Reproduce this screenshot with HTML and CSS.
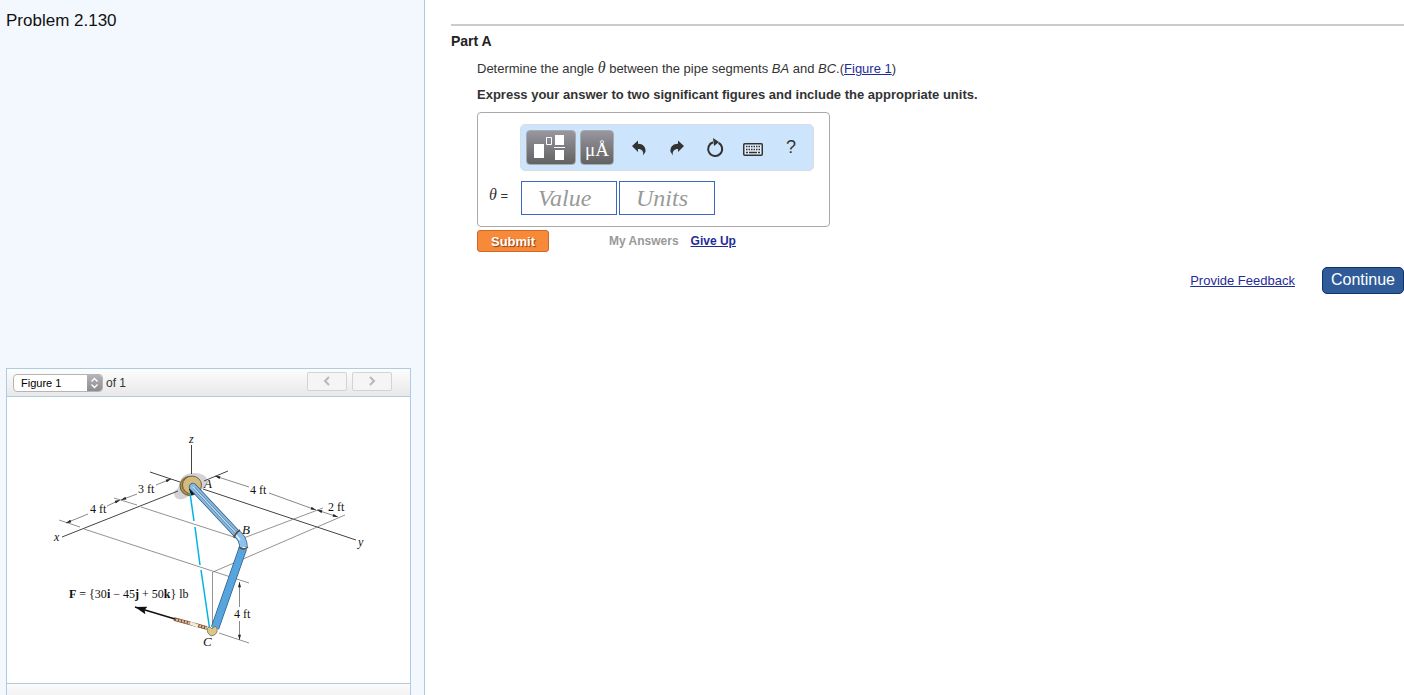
FILE: index.html
```html
<!DOCTYPE html>
<html lang="en">

<head>
    <meta charset="UTF-8">
    <meta name="viewport" content="width=device-width, initial-scale=1.0">
    <title>Problem 2.130</title>
    <link rel="stylesheet" href="styles.css">
</head>

<body>
    <aside class="sidebar">
        <h1>Problem 2.130</h1>

        <section class="figure-panel">
            <div class="figure-bar">
                <div class="figure-select">
                    <select id="figure" aria-label="Figure">
                        <option>Figure 1</option>
                    </select>
                    <span class="arrows">
                        <svg width="9" height="12" viewBox="0 0 9 12"><path d="M1.5 4.5l3-3 3 3M1.5 7.5l3 3 3-3" fill="none" stroke="#fff" stroke-width="1.4"/></svg>
                    </span>
                </div>
                <label for="figure">of 1</label>
                <div class="pager">
                    <button type="button" aria-label="Previous figure" disabled>
                        <svg width="8" height="10" viewBox="0 0 8 10"><path d="M6 1L2 5l4 4" fill="none" stroke="#b8b8b8" stroke-width="2"/></svg>
                    </button>
                    <button type="button" aria-label="Next figure" disabled>
                        <svg width="8" height="10" viewBox="0 0 8 10"><path d="M2 1l4 4-4 4" fill="none" stroke="#b8b8b8" stroke-width="2"/></svg>
                    </button>
                </div>
            </div>

            <figure>
                <svg class="diagram" viewBox="7 397 403 286">
                    <defs>
                        <marker id="tip" viewBox="0 0 7 4" refX="7" refY="2" markerWidth="6" markerHeight="3" markerUnits="userSpaceOnUse" orient="auto-start-reverse">
                            <path d="M0 0l7 2-7 2z" fill="#222"/>
                        </marker>
                        <marker id="force" viewBox="0 0 12 8" refX="12" refY="4" markerWidth="12" markerHeight="8" markerUnits="userSpaceOnUse" orient="auto">
                            <path d="M0 0l12 4-12 4 2-4z" fill="#111"/>
                        </marker>
                    </defs>

                    <!-- wall behind A -->
                    <path d="M174 493c1-4 4-3 5-8 1-8 7-12 14-12 6 0 12 1 14 6 1 5-3 8-6 12-4 5-10 4-14 6-5 4-13 3-13-4z" fill="#d3d3d6"/>

                    <!-- x, y, z axes -->
                    <g stroke="#444" stroke-width="1">
                        <path d="M191.500 445V474M62 537L178 491M203 489L356 540"/>
                        <path d="M150 472L180 482M204 481L228 471"/>
                    </g>

                    <!-- construction lines -->
                    <g stroke="#777" stroke-width="0.800" fill="none">
                        <path d="M59 520L80 527M84 529L249 583"/>
                        <path d="M114 498L137 505M141 507L237 538"/>
                        <path d="M241 539L323 508M213 572L345 515"/>
                        <path d="M212.500 572V628M219 633L249 643"/>
                    </g>

                    <!-- dimensions -->
                    <g stroke="#555" stroke-width="0.700">
                        <path d="M88 514L66 523" marker-end="url(#tip)"/>
                        <path d="M107 506L120 500" marker-end="url(#tip)"/>
                        <path d="M137 494L121 500" marker-end="url(#tip)"/>
                        <path d="M156 485L171 479" marker-end="url(#tip)"/>
                        <path d="M249 487L215 476" marker-end="url(#tip)"/>
                        <path d="M269 493L316 510" marker-end="url(#tip)"/>
                        <path d="M317 510L338 517" marker-start="url(#tip)" marker-end="url(#tip)"/>
                        <path d="M239.500 607V582" marker-end="url(#tip)"/>
                        <path d="M239.500 621V640" marker-end="url(#tip)"/>
                    </g>

                    <!-- flange A -->
                    <ellipse cx="189.500" cy="486" rx="9.500" ry="9.500" fill="#a98f54" stroke="#594820" stroke-width="0.800"/>
                    <ellipse cx="192" cy="485" rx="9.500" ry="9" fill="#d5bb7b" stroke="#594820" stroke-width="0.800"/>
                    <path d="M189 489l2 6 5-1-2-5z" fill="#111"/>

                    <!-- line AC -->
                    <path d="M190 493L194 521M195 527L200 565M201 570L209.500 628" stroke="#00b3e3" stroke-width="1.500"/>

                    <!-- pipe AB -->
                    <path d="M193 487L237 534" stroke="#2d5680" stroke-width="8" stroke-linecap="round"/>
                    <path d="M193 487L237 534" stroke="#84b9e4" stroke-width="6.600" stroke-linecap="round"/>
                    <path d="M194 488L237 534" stroke="#3e6182" stroke-width="2.400"/>
                    <path d="M193 487L237 534" stroke="#c4e0f5" stroke-width="1.400"/>

                    <!-- pipe BC -->
                    <path d="M243 548L215 628" stroke="#2d5680" stroke-width="8.400"/>
                    <path d="M243 548L215 628" stroke="#57a5df" stroke-width="7"/>

                    <!-- elbow B -->
                    <path d="M237 534Q243 538 243.500 547" fill="none" stroke="#315c82" stroke-width="8.500"/>
                    <path d="M237 534Q243 538 243.500 547" fill="none" stroke="#8cc2eb" stroke-width="7"/>
                    <path d="M236 535l4 5" stroke="#e4f3ff" stroke-width="1.500"/>
                    <path d="M234 538q1-5 6-8M239 547q4 4 9 0" fill="none" stroke="#544e49" stroke-width="1.600"/>

                    <!-- rope and force -->
                    <path d="M207 628L174 619" stroke="#6b4a35" stroke-width="3.600"/>
                    <path d="M207 628L174 619" stroke="#e3b58d" stroke-width="2.400" stroke-dasharray="2 1"/>
                    <path d="M198 626L190 623" stroke="#f1ebdd" stroke-width="3"/>
                    <path d="M175 619L135 607" stroke="#111" stroke-width="1.500" marker-end="url(#force)"/>
                    <path d="M207 629q2-4 5 0l3-3q3 2 2 6-2 4-6 4-4-2-4-7z" fill="#d8c98e" stroke="#716136" stroke-width="0.700"/>

                    <g class="labels">
                        <text x="189" y="443" class="axis">z</text>
                        <text x="54" y="541" class="axis">x</text>
                        <text x="358" y="546" class="axis">y</text>
                        <text x="204" y="488" class="point">A</text>
                        <text x="242" y="534" class="point">B</text>
                        <text x="203" y="646" class="point">C</text>
                        <text x="138" y="493">3 ft</text>
                        <text x="90" y="513">4 ft</text>
                        <text x="250" y="494">4 ft</text>
                        <text x="328" y="511">2 ft</text>
                        <text x="234" y="618">4 ft</text>
                        <text x="69" y="598" class="force"><tspan class="vector">F</tspan> = {30<tspan class="vector">i</tspan> − 45<tspan class="vector">j</tspan> + 50<tspan class="vector">k</tspan>} lb</text>
                    </g>
                </svg>
            </figure>

            <div class="figure-foot"></div>
        </section>
    </aside>

    <main>
        <h2>Part A</h2>

        <form class="part">
            <p>Determine the angle <i class="theta">θ</i> between the pipe segments <i>BA</i> and <i>BC</i>.(<a href="#figure">Figure 1</a>)</p>
            <p class="instructions">Express your answer to two significant figures and include the appropriate units.</p>

            <div class="answer">
                <div class="toolbar">
                    <button type="button" class="key templates" aria-label="Templates">
                        <svg width="36" height="32" viewBox="0 0 36 32">
                            <path d="M1 12h10v14H1zM22 3h9v10h-9zM22 18h9v10h-9zM21 15h11v1H21z" fill="#fff"/>
                            <path d="M13.500 5.500h5v7h-5z" fill="none" stroke="#fff"/>
                        </svg>
                    </button>
                    <button type="button" class="key symbols" aria-label="Symbols">μÅ</button>
                    <button type="button" class="tool" aria-label="Undo">
                        <svg width="16" height="16" viewBox="0 0 16 16"><path d="M1 6l6-5.500v3.200c5 0 8 3 7.500 8L12 15.500c1-4-1-6.500-5-6.500v3z" fill="#333"/></svg>
                    </button>
                    <button type="button" class="tool" aria-label="Redo">
                        <svg width="16" height="16" viewBox="0 0 16 16"><path d="M15 6L9 .5v3.200c-5 0-8 3-7.500 8L4 15.500C3 11.500 5 9 9 9v3z" fill="#333"/></svg>
                    </button>
                    <button type="button" class="tool" aria-label="Reset">
                        <svg width="18" height="20" viewBox="0 0 18 20"><path d="M12.500 4.800A7 7 0 1 1 7 4.300" fill="none" stroke="#333" stroke-width="2"/><path d="M7 0l6 4-5 4z" fill="#333"/></svg>
                    </button>
                    <button type="button" class="tool keyboard" aria-label="Keyboard">
                        <svg width="20" height="13" viewBox="0 0 20 13">
                            <rect x="0.750" y="0.750" width="18.500" height="11.500" rx="1" fill="#e4f1fd" stroke="#333" stroke-width="1.500"/>
                            <path d="M3 3.500h14M3 6.500h14" stroke="#333" stroke-width="1.600" stroke-dasharray="1.500 1"/>
                            <path d="M3 9.500h2M6 9.500h8M15 9.500h2" stroke="#333" stroke-width="1.500"/>
                        </svg>
                    </button>
                    <button type="button" class="tool" aria-label="Help">?</button>
                </div>

                <div class="entry">
                    <label for="value"><i class="theta">θ</i> =</label>
                    <input id="value" type="text" placeholder="Value">
                    <input type="text" placeholder="Units" aria-label="Units">
                </div>
            </div>

            <div class="actions">
                <button type="submit" class="submit">Submit</button>
                <span class="my-answers">My Answers</span>
                <a href="#">Give Up</a>
            </div>
        </form>

        <div class="page-links">
            <a href="#">Provide Feedback</a>
            <button type="button" class="continue">Continue</button>
        </div>
    </main>
</body>

</html>
```
FILE: styles.css
```css
* {
    margin: 0;
    padding: 0;
    box-sizing: border-box;
}

body {
    display: flex;
    min-height: 100vh;
    background: #fff;
    color: #333;
    font-family: "Liberation Sans", Arial, sans-serif;
    font-size: 13px;
}

svg {
    display: block;
}

a {
    color: #1f2d99;
}

button,
input,
select {
    font-family: inherit;
}

/* left column */
.sidebar {
    display: flex;
    flex: none;
    flex-direction: column;
    width: 425px;
    padding: 11px 13px 0 6px;
    background: #f3f8ff;
    border-right: 1px solid #b0cce0;
}

.sidebar h1 {
    color: #111;
    font-size: 17px;
    font-weight: normal;
    line-height: 20px;
}

.figure-panel {
    margin-top: auto;
    background: #fff;
    border: 1px solid #b0cce0;
    border-bottom: 0;
}

.figure-bar {
    display: flex;
    align-items: center;
    height: 28px;
    padding: 0 18px 0 6px;
    background: linear-gradient(#fdfdfd, #e8e8e8);
    border-bottom: 1px solid #b0cce0;
    font-size: 12px;
}

.figure-select {
    display: flex;
    width: 90px;
    height: 18px;
    margin-right: 3px;
    overflow: hidden;
    background: #fff;
    border: 1px solid #b5b5b5;
    border-radius: 4px;
}

.figure-select select {
    flex: 1;
    min-width: 0;
    padding-left: 7px;
    appearance: none;
    background: none;
    border: 0;
    color: #000;
    font-size: 11px;
}

.arrows {
    display: flex;
    align-items: center;
    justify-content: center;
    width: 15px;
    background: linear-gradient(#b5b4b8, #8c8b90);
    pointer-events: none;
}

.pager {
    display: flex;
    gap: 5px;
    margin: 0 0 3px auto;
}

.pager button {
    display: flex;
    align-items: center;
    justify-content: center;
    width: 40px;
    height: 19px;
    background: #f5f5f5;
    border: 1px solid #d3d3d3;
    border-radius: 2px;
}

.diagram {
    width: 100%;
}

.labels {
    fill: #111;
    font-family: "Liberation Serif", "Times New Roman", serif;
    font-size: 12px;
}

.axis,
.point {
    font-style: italic;
}

.point {
    font-size: 13px;
}

.vector {
    font-weight: bold;
}

.figure-foot {
    height: 12px;
    background: linear-gradient(#fbfbfb, #f3f3f3);
    border-top: 1px solid #b8c8d8;
}

/* question */
main {
    flex: 1;
    padding: 24px 0 0 26px;
}

h2 {
    padding-top: 7px;
    border-top: 2px solid #ccc;
    color: #222;
    font-size: 14px;
    line-height: 16px;
}

.part {
    padding: 10px 0 0 26px;
}

.part p {
    margin-bottom: 6px;
    line-height: 20px;
}

.theta {
    font-family: "Liberation Serif", "Times New Roman", serif;
    font-size: 16px;
    line-height: 1;
}

.part .instructions {
    margin-bottom: 7px;
    font-weight: bold;
}

.answer {
    width: 353px;
    padding: 11px 15px 11px 11px;
    border: 1px solid #aaa;
    border-radius: 4px;
}

.toolbar {
    display: flex;
    align-items: center;
    height: 47px;
    margin-left: 31px;
    padding: 0 0 0 5px;
    background: #cce5fd;
    border: 1px solid #d9dde2;
    border-radius: 5px;
}

.toolbar button {
    display: flex;
    align-items: center;
    justify-content: center;
}

.key {
    height: 35px;
    background: linear-gradient(#98969f, #626262);
    border: 1px solid #aaa;
    border-radius: 4px;
    color: #fff;
}

.templates {
    width: 50px;
    margin-right: 4px;
}

.toolbar .symbols {
    width: 34px;
    margin-right: 6px;
    padding-top: 4px;
    font-family: "Liberation Serif", "Times New Roman", serif;
    font-size: 19px;
}

.tool {
    width: 38px;
    height: 35px;
    background: none;
    border: 0;
    color: #333;
    font-size: 18px;
}

.keyboard {
    padding-top: 4px;
}

.entry {
    display: flex;
    gap: 2px;
    margin-top: 10px;
}

.entry label {
    width: 30px;
    line-height: 30px;
    white-space: nowrap;
}

.entry input {
    width: 96px;
    height: 34px;
    padding-left: 16px;
    border: 1px solid #3b66c4;
    color: #333;
    font-family: "Liberation Serif", "Times New Roman", serif;
    font-size: 24px;
}

.entry input::placeholder {
    color: #999;
    font-style: italic;
    opacity: 1;
}

.actions {
    display: flex;
    align-items: center;
    padding-top: 3px;
    font-size: 12px;
    font-weight: bold;
}

.submit {
    width: 72px;
    height: 22px;
    margin-right: 60px;
    background: #f78a38;
    border: 1px solid #d0662c;
    border-radius: 3px;
    color: #fff;
    font-size: 13px;
    font-weight: bold;
    text-shadow: 1px 1px 1px #8c3c10;
}

.my-answers {
    margin-right: 12px;
    color: #999;
}

.page-links {
    display: flex;
    align-items: center;
    justify-content: flex-end;
    gap: 27px;
    margin-top: 15px;
}

.continue {
    height: 27px;
    padding: 0 8px 2px;
    background: #2f5c99;
    border: 1px solid #0e3566;
    border-radius: 5px;
    color: #fff;
    font-size: 16px;
}
```
